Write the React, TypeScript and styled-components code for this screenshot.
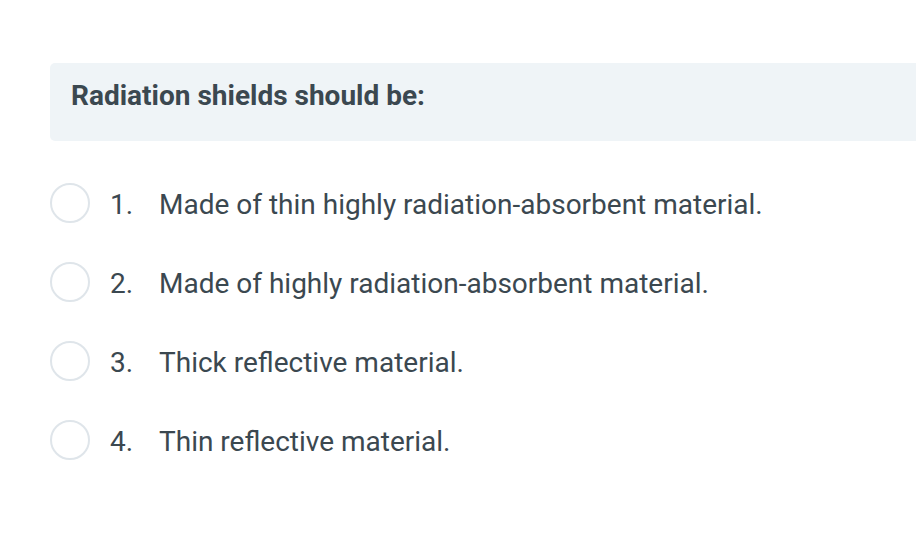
import React from "react";
import styled, { createGlobalStyle } from "styled-components";

const Global = createGlobalStyle`
  html, body { margin: 0; padding: 0; background: #ffffff; }
  body { font-family: Roboto, "Noto Sans", sans-serif; }
`;

const Page = styled.div`
  padding: 63px 0 0 50px;
  box-sizing: border-box;
  width: 916px;
  overflow: hidden;
`;

const Question = styled.div`
  background: #eff4f7;
  border-radius: 5px 0 0 5px;
  height: 78px;
  box-sizing: border-box;
  padding: 0 21px;
  display: flex;
  align-items: center;
  padding-bottom: 14px;
  font-size: 28px;
  font-weight: 700;
  color: #3b4850;
`;

const Options = styled.ul`
  list-style: none;
  margin: 42px 0 0 0;
  padding: 0;
  display: flex;
  flex-direction: column;
  gap: 39px;
`;

const Option = styled.li`
  display: flex;
  align-items: center;
  height: 40px;
  font-size: 28px;
  color: #3b4850;
`;

const Radio = styled.span`
  width: 40px;
  height: 40px;
  box-sizing: border-box;
  border: 2px solid #dfe5ea;
  border-radius: 50%;
  flex: none;
  margin-right: 20px;
`;

const Num = styled.span`
  width: 49px;
  flex: none;
  padding-top: 3px;
`;

const Label = styled.span`
  padding-top: 3px;
`;

const items = [
  "Made of thin highly radiation-absorbent material.",
  "Made of highly radiation-absorbent material.",
  "Thick reflective material.",
  "Thin reflective material.",
];

export default function App() {
  return (
    <Page>
      <Global />
      <Question>Radiation shields should be:</Question>
      <Options>
        {items.map((t, i) => (
          <Option key={i}>
            <Radio />
            <Num>{i + 1}.</Num>
            <Label>{t}</Label>
          </Option>
        ))}
      </Options>
    </Page>
  );
}
